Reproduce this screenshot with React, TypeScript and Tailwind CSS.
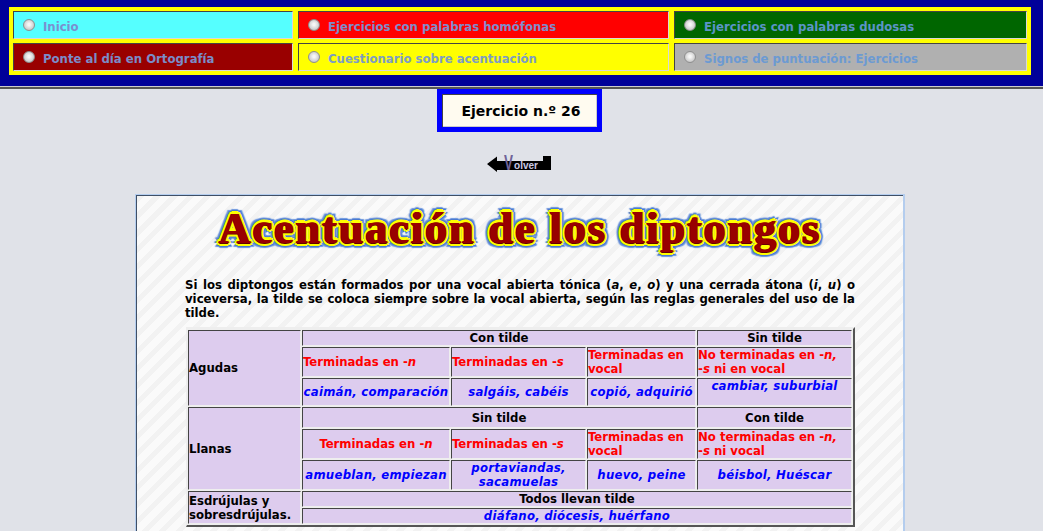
import React from 'react';

const menu = [
  { label: 'Inicio', bg: 'bg-[#55ffff]', text: 'text-[#7b8fd0]' },
  { label: 'Ejercicios con palabras homófonas', bg: 'bg-[#ff0000]', text: 'text-[#7f8ccb]' },
  { label: 'Ejercicios con palabras dudosas', bg: 'bg-[#006600]', text: 'text-[#5c94c8]' },
  { label: 'Ponte al día en Ortografía', bg: 'bg-[#990000]', text: 'text-[#7b8cc8]' },
  { label: 'Cuestionario sobre acentuación', bg: 'bg-[#ffff00]', text: 'text-[#7c9cc4]' },
  { label: 'Signos de puntuación: Ejercicios', bg: 'bg-[#b0b0b0]', text: 'text-[#6c9ad2]' },
];

function MenuItem({ label, bg, text }: { label: string; bg: string; text: string }) {
  return (
    <div className={`flex items-center gap-2 border border-t-[#444] border-l-[#444] border-r-[#d8d8d8] border-b-[#d8d8d8] pt-[2px] pl-[9px] ${bg}`}>
      <span className="mb-[2px] h-3 w-3 shrink-0 rounded-full border border-[#8f8f8f] bg-[radial-gradient(circle_at_50%_45%,#f6f6f6_15%,#bcbcbc_90%)]" />
      <span className={`text-[13px] leading-none font-bold [font-stretch:condensed] ${text}`}>{label}</span>
    </div>
  );
}

function Cell({
  children,
  className = '',
  ...rest
}: React.TdHTMLAttributes<HTMLTableCellElement>) {
  return (
    <td
      {...rest}
      className={`border border-t-[#444] border-l-[#444] border-r-[#eee] border-b-[#eee] bg-[#ddccee] p-0 text-[13px] leading-[14px] font-bold [font-stretch:condensed] ${className}`}
    >
      {children}
    </td>
  );
}

const Red = ({ children, center }: { children: React.ReactNode; center?: boolean }) => (
  <Cell className={`text-[#ff0000] ${center ? 'text-center' : 'text-left'}`}>{children}</Cell>
);

const Blue = ({ children, top, ...rest }: { children: React.ReactNode; top?: boolean; colSpan?: number }) => (
  <Cell {...rest} className={`text-center tracking-[0.25px] text-[#0000ff] italic ${top ? 'align-top' : 'align-middle'}`}>{children}</Cell>
);

const Head = ({ children, ...rest }: { children: React.ReactNode; colSpan?: number }) => (
  <Cell {...rest} className="text-center text-black">{children}</Cell>
);

const Side = ({ children, rowSpan }: { children: React.ReactNode; rowSpan: number }) => (
  <Cell rowSpan={rowSpan} className="text-left text-black">{children}</Cell>
);

// keeps the hyphen and its italic ending on one line
const Ending = ({ children }: { children: React.ReactNode }) => (
  <span className="whitespace-nowrap">-<i>{children}</i></span>
);

export default function App() {
  return (
    <div className="h-[531px] overflow-hidden bg-[#e0e2e8] font-['DejaVu_Sans',sans-serif]">
      {/* top menu */}
      <div className="h-[89px] border-b-2 border-b-[#555] bg-[#000099] px-[9px] pt-[7px] shadow-[inset_0_-1px_0_#ccc]">
        <div className="grid h-[68px] w-[1022px] grid-cols-[280px_371px_353px] grid-rows-[28px_28px] gap-x-[5px] gap-y-[4px] bg-[#ffff00] p-1">
          {menu.map((m) => (
            <MenuItem key={m.label} {...m} />
          ))}
        </div>
      </div>

      <div className="flex justify-center pr-[4px]">
        <div className="flex h-[43px] w-[165px] items-center justify-center border-[5px] border-[#0000ff] bg-[#fffbf0] pt-[2px] pl-[3px] text-[14px] font-bold text-black shadow-[inset_1px_1px_0_#444,inset_-1px_-1px_0_#ccc]">
          Ejercicio n.º 26
        </div>
      </div>

      {/* volver */}
      <div className="mt-[22px] flex justify-center pr-[4px]">
        <svg width="66" height="20" viewBox="0 0 66 20" className="ml-px">
          <path d="M0 10 L10 2.500 V7 H56 V2 H64 V16 H10 V18 Z" fill="#000" />
          <text x="17" y="16" fontSize="22" fontWeight="700" fill="#6f6398" fontFamily="Liberation Sans" textLength="9" lengthAdjust="spacingAndGlyphs">V</text>
          <text x="27" y="15" fontSize="11" fontWeight="700" fill="#c9c9e6" fontFamily="Liberation Sans" textLength="24" lengthAdjust="spacingAndGlyphs">olver</text>
        </svg>
      </div>

      {/* main panel */}
      <div className="mt-[20px] ml-[135px] h-[400px] w-[770px] border-t border-r-2 border-l border-[#b4cdee]">
        <div className="h-full border-t border-l border-t-[#3f4f66] border-l-[#3f4f66] bg-[#f8f8f8] bg-[repeating-linear-gradient(135deg,#f2f2f2_0px,#f2f2f2_5px,#fafafa_5px,#fafafa_12px)] pt-[7px]">
          <h1 className="h-[75px] text-center font-['Liberation_Serif',serif] text-[44px] leading-[52px] font-bold tracking-[2px] whitespace-nowrap text-[#990000] [text-shadow:1px_0_0_#990000,-1px_0_0_#880000,0_1px_0_#660000,2px_0_0_#ffff00,-2px_0_0_#ffff00,0_2px_0_#ffff00,0_-2px_0_#ffff00,2px_2px_0_#ffff00,-2px_2px_0_#ffff00,2px_-2px_0_#ffff00,-2px_-2px_0_#ffff00,3px_0_0_#ffff00,-3px_0_0_#ffff00,0_3px_0_#ffff00,0_-3px_0_#ffff00,4px_0_0_#4a7ad0,-4px_0_0_#4a7ad0,0_4px_0_#4a7ad0,0_-4px_0_#4a7ad0,3px_3px_0_#4a7ad0,-3px_3px_0_#4a7ad0,3px_-3px_0_#4a7ad0,-3px_-3px_0_#4a7ad0,5px_0_1px_#6a94dc,-5px_0_1px_#6a94dc,0_5px_1px_#6a94dc,0_-5px_1px_#6a94dc,4px_4px_1px_#6a94dc,-4px_4px_1px_#6a94dc,4px_-4px_1px_#6a94dc,-4px_-4px_1px_#6a94dc]">
            Acentuación de los diptongos
          </h1>

          <p className="mr-[48px] ml-[48px] text-justify text-[13px] leading-[14px] font-bold text-black [font-stretch:condensed]">
            Si los diptongos están formados por una vocal abierta tónica (<i>a</i>, <i>e</i>, <i>o</i>) y una cerrada átona (<i>i</i>, <i>u</i>) o viceversa, la tilde se coloca siempre sobre la vocal abierta, según las reglas generales del uso de la tilde.
          </p>

          <table className="mt-[7px] ml-[49px] w-[669px] table-fixed border-separate border-spacing-[1px] border-t-2 border-r-2 border-b-2 border-l border-t-[#eee] border-r-[#555] border-b-[#555] border-l-[#eee] bg-[#eee]">
            <colgroup>
              <col className="w-[113px]" />
              <col className="w-[148px]" />
              <col className="w-[135px]" />
              <col className="w-[109px]" />
              <col className="w-[155px]" />
            </colgroup>
            <tbody>
              <tr className="h-[16px]">
                <Side rowSpan={3}>Agudas</Side>
                <Head colSpan={3}>Con tilde</Head>
                <Head>Sin tilde</Head>
              </tr>
              <tr className="h-[30px]">
                <Red>Terminadas en <Ending>n</Ending></Red>
                <Red>Terminadas en <Ending>s</Ending></Red>
                <Red>Terminadas en vocal</Red>
                <Red>No terminadas en <Ending>n,</Ending> <Ending>s</Ending> ni en vocal</Red>
              </tr>
              <tr className="h-[28px]">
                <Blue>caimán, comparación</Blue>
                <Blue>salgáis, cabéis</Blue>
                <Blue>copió, adquirió</Blue>
                <Blue top>cambiar, suburbial</Blue>
              </tr>
              <tr className="h-[21px]">
                <Side rowSpan={3}>Llanas</Side>
                <Head colSpan={3}>Sin tilde</Head>
                <Head>Con tilde</Head>
              </tr>
              <tr className="h-[30px]">
                <Red center>Terminadas en <Ending>n</Ending></Red>
                <Red>Terminadas en <Ending>s</Ending></Red>
                <Red>Terminadas en vocal</Red>
                <Red>No terminadas en <Ending>n,</Ending> <Ending>s</Ending> ni vocal</Red>
              </tr>
              <tr className="h-[30px]">
                <Blue>amueblan, empiezan</Blue>
                <Blue>portaviandas, sacamuelas</Blue>
                <Blue>huevo, peine</Blue>
                <Blue>béisbol, Huéscar</Blue>
              </tr>
              <tr className="h-[16px]">
                <Side rowSpan={2}>Esdrújulas y sobresdrújulas.</Side>
                <Head colSpan={4}>Todos llevan tilde</Head>
              </tr>
              <tr className="h-[16px]">
                <Blue colSpan={4}>diáfano, diócesis, huérfano</Blue>
              </tr>
            </tbody>
          </table>
        </div>
      </div>
    </div>
  );
}
